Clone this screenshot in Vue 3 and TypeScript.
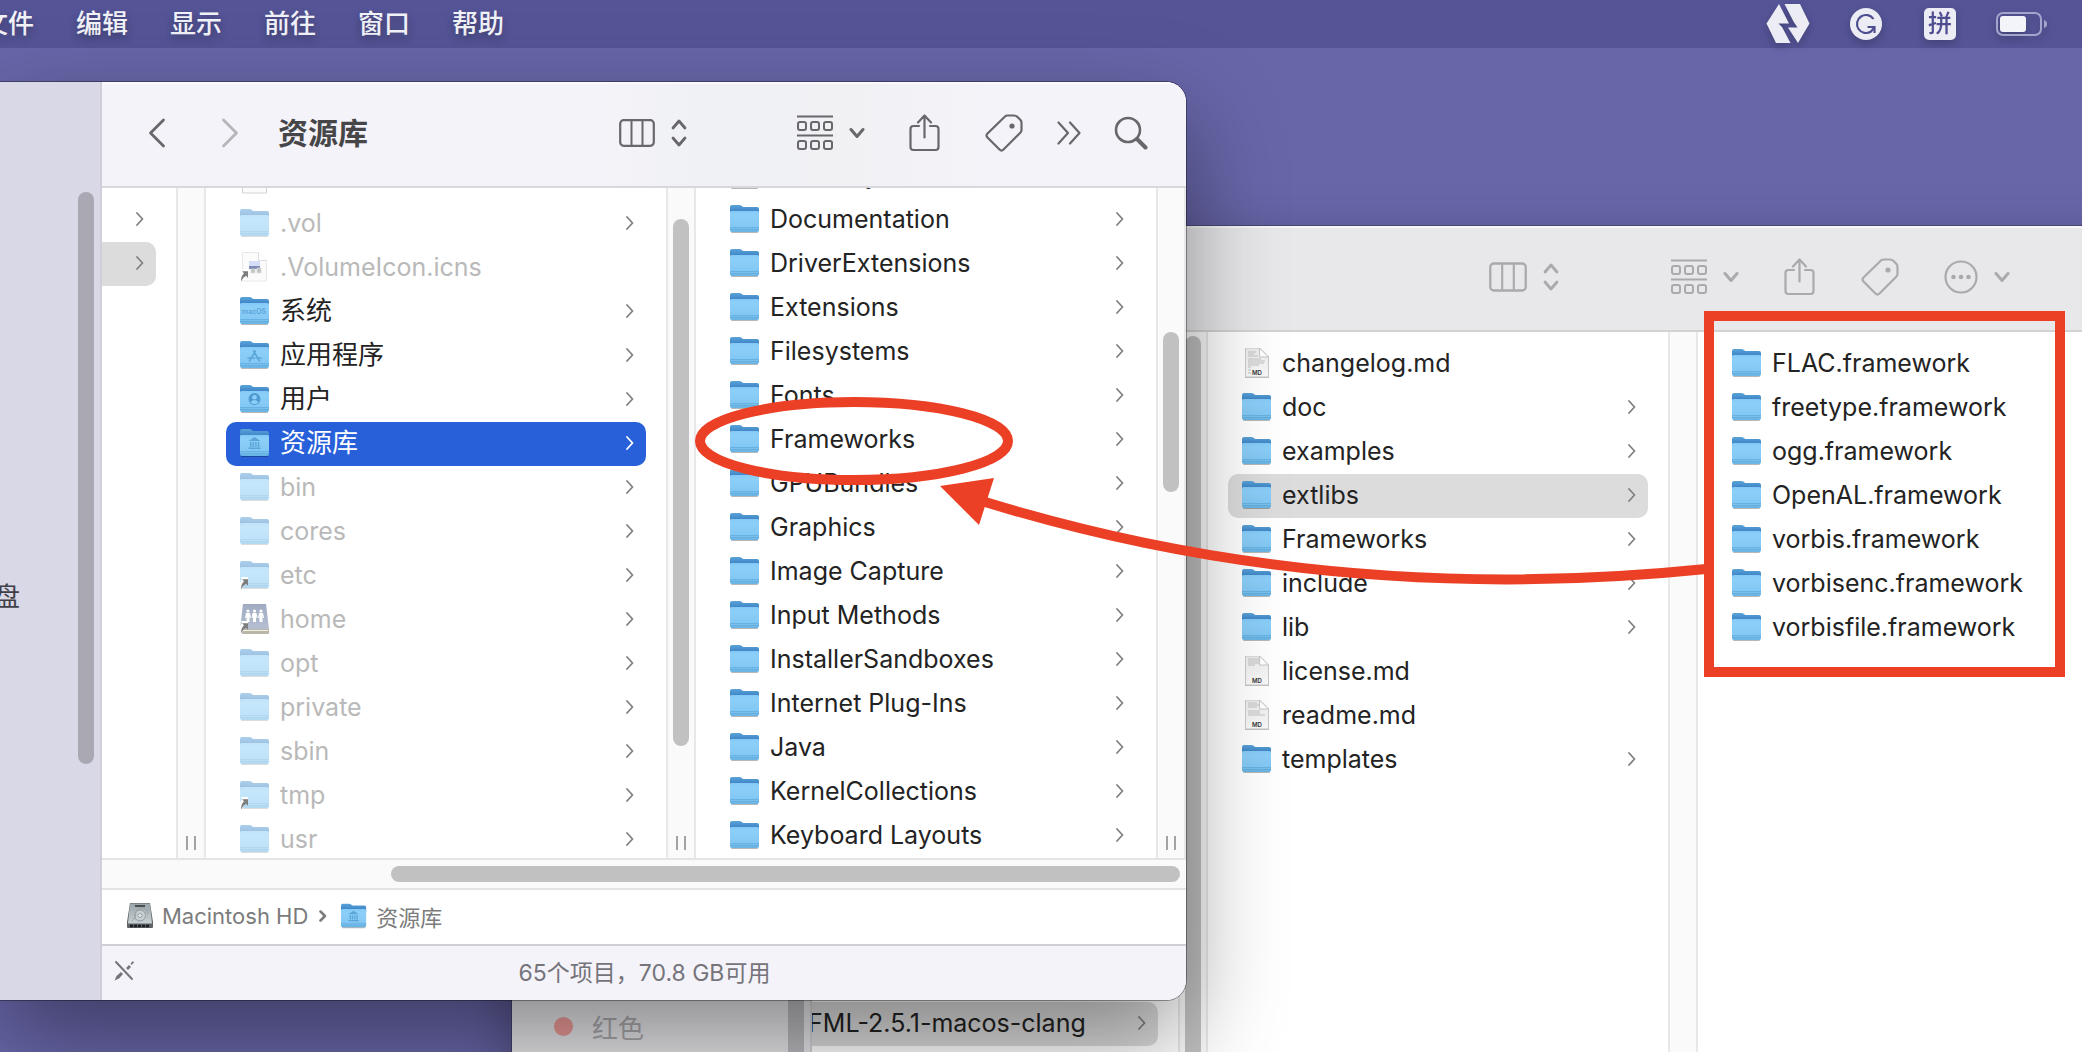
<script setup lang="ts">
type Mark = 'apps' | 'users' | 'library' | 'alias'
type Kind = 'folder' | 'doc' | 'md' | 'volume' | 'home'

interface Entry {
  name: string
  kind: Kind
  marks?: Mark[]
  caption?: string
  preview?: string
  dim?: boolean
  selected?: boolean
  leaf?: boolean
}

const folder = (name: string, extra: Partial<Entry> = {}): Entry => ({ name, kind: 'folder', ...extra })
const dim = (name: string, extra: Partial<Entry> = {}): Entry => folder(name, { dim: true, ...extra })
const markdown = (name: string, preview: string): Entry => ({ name, kind: 'md', preview, leaf: true })

const menus: string[] = ['文件', '编辑', '显示', '前往', '窗口', '帮助']

const rootEntries: Entry[] = [
  { name: '.file', kind: 'doc', dim: true, leaf: true },
  dim('.vol'),
  { name: '.VolumeIcon.icns', kind: 'volume', marks: ['alias'], dim: true, leaf: true },
  folder('系统', { caption: 'macOS' }),
  folder('应用程序', { marks: ['apps'] }),
  folder('用户', { marks: ['users'] }),
  folder('资源库', { marks: ['library'], selected: true }),
  dim('bin'),
  dim('cores'),
  dim('etc', { marks: ['alias'] }),
  { name: 'home', kind: 'home', marks: ['alias'], dim: true },
  dim('opt'),
  dim('private'),
  dim('sbin'),
  dim('tmp', { marks: ['alias'] }),
  dim('usr'),
]

const libraryEntries: Entry[] = [
  'DirectoryServices', 'Documentation', 'DriverExtensions', 'Extensions', 'Filesystems', 'Fonts',
  'Frameworks', 'GPUBundles', 'Graphics', 'Image Capture', 'Input Methods', 'InstallerSandboxes',
  'Internet Plug-Ins', 'Java', 'KernelCollections', 'Keyboard Layouts',
].map((n) => folder(n))

const sfmlEntries: Entry[] = [
  markdown('changelog.md', 'M6 4h8M6 6h6M6 8h10M6 11h13M6 13h17M6 15h16M6 17h11M6 19h3M6 22h3M6 25h3'),
  folder('doc'),
  folder('examples'),
  folder('extlibs', { selected: true }),
  folder('Frameworks'),
  folder('include'),
  folder('lib'),
  markdown('license.md', 'M6 3h11M6 5h11M6 7h11M6 9h7'),
  markdown('readme.md', 'M6 3h9M6 5h11M6 7h9M6 11h12M6 13h12M6 15h17'),
  folder('templates'),
]

const extlibEntries: Entry[] = ['FLAC', 'freetype', 'ogg', 'OpenAL', 'vorbis', 'vorbisenc', 'vorbisfile'].map((n) =>
  folder(`${n}.framework`, { leaf: true }),
)

const downloads: Entry[] = [folder('SFML-2.5.1-macos-clang', { selected: true })]

const backColumns = [
  { id: 'downloads', entries: downloads, gutter: true },
  { id: 'sfml', entries: sfmlEntries, gutter: true },
  { id: 'extlibs', entries: extlibEntries, gutter: false },
]
</script>

<template>
  <div class="desktop">
    <svg class="defs" width="0" height="0" aria-hidden="true">
      <defs>
        <linearGradient id="g-front" x1="0" y1="0" x2="0" y2="1">
          <stop offset="0" stop-color="#84c9f6" />
          <stop offset=".2" stop-color="#8ccff9" />
          <stop offset=".75" stop-color="#83c8f4" />
          <stop offset="1" stop-color="#66b2e2" />
        </linearGradient>
        <linearGradient id="g-back" x1="0" y1="0" x2="0" y2="1">
          <stop offset="0" stop-color="#5aa3d8" />
          <stop offset="1" stop-color="#2f74bd" />
        </linearGradient>
        <linearGradient id="g-disk" x1="0" y1="0" x2="0" y2="1">
          <stop offset="0" stop-color="#9aa4aa" />
          <stop offset="1" stop-color="#c9d1d5" />
        </linearGradient>
        <linearGradient id="g-home" x1="0" y1="0" x2="0" y2="1">
          <stop offset="0" stop-color="#a0abc2" />
          <stop offset="1" stop-color="#b6bfd2" />
        </linearGradient>
        <linearGradient id="g-page" x1="0" y1="0" x2="0" y2="1">
          <stop offset="0" stop-color="#ececec" />
          <stop offset="1" stop-color="#fafafa" />
        </linearGradient>
      </defs>
      <symbol id="folder" viewBox="0 0 30 30">
        <rect x="1" y="26" width="27" height="3" rx="1" fill="#000" opacity=".28" />
        <path d="M0 3q0-2 2-2h7q2 0 3 1l1 1h14q2 0 2 2v6H0z" fill="url(#g-back)" />
        <path d="M0 8q0-1 2-1h25q2 0 2 1v18q0 2-2 2H2q-2 0-2-2z" fill="url(#g-front)" />
        <path d="M0 23.500h29M0 25.500h29" stroke="#4f9fd2" stroke-width=".7" opacity=".7" />
      </symbol>
      <symbol id="apps" viewBox="0 0 30 30">
        <path d="M13.500 11l6 10M15.500 11l-6 10M8 18h6.500M16.500 18h4.500" fill="none" stroke="#5ba5d8" stroke-width="1.500" stroke-linecap="round" />
      </symbol>
      <symbol id="users" viewBox="0 0 30 30">
        <circle cx="14.500" cy="15" r="6" fill="#4f9bd0" />
        <circle cx="14.500" cy="13.200" r="2.300" fill="#8ccff9" />
        <path d="M10.500 18.500q1-2.500 4-2.500t4 2.500q-4 3-8 0z" fill="#8ccff9" />
      </symbol>
      <symbol id="library" viewBox="0 0 30 30">
        <path d="M8.500 13l6-4 6 4zM10 14h1.600v5H10zm2.600 0h1.400v5h-1.400zm2.600 0h1.400v5h-1.400zm2.600 0h1.500v5h-1.500zM8.500 19.500h12V21h-12z" fill="#5ba5d8" />
      </symbol>
      <symbol id="alias" viewBox="0 0 30 30">
        <path d="M0 30v-5q0-4 2-6l-1-2h7v8l-2-2q-3 2-4 7z" fill="#fff" />
        <path d="M1 29.500q0-6 3-8l-1.800-2.300H8v6.600l-2-2q-3 1.500-5 5.700z" fill="#7d7d7d" />
      </symbol>
      <symbol id="doc" viewBox="0 0 30 30">
        <path d="M2.500 1.500h16l8 8v19.500h-24z" fill="#fbfbfb" stroke="#d4d4d4" />
        <path d="M18.500 1.500v8h8" fill="#fff" stroke="#ccc" />
      </symbol>
      <symbol id="volume" viewBox="0 0 30 30">
        <path d="M2.500.500h16l8 8v20.500h-24z" fill="#fbfbfb" stroke="#e8e8e8" />
        <path d="M18.500.500v8h8" fill="#fff" stroke="#dedede" />
        <path d="M9 9h11v8H9z" fill="#d5def8" />
        <path d="M9 14h11v3H9z" fill="#7f8bb4" />
        <path d="M11 17h4v4h-4zm6-1h4v5h-4z" fill="#c2c2c2" stroke="#ddd" stroke-width=".7" />
      </symbol>
      <symbol id="md" viewBox="0 0 30 30">
        <path d="M3 29h24" stroke="#000" stroke-width="2" opacity=".25" />
        <path d="M3.500 0h14l9 9v20h-23z" fill="url(#g-page)" stroke="#c9c9c9" />
        <path d="M17.500 0v9h9z" fill="#fff" stroke="#bdbdbd" stroke-width=".8" />
      </symbol>
      <symbol id="home" viewBox="0 0 30 30">
        <path d="M3 0h23l3 25H0z" fill="url(#g-home)" />
        <path d="M0 25h29v4q0 1-1 1H1q-1 0-1-1z" fill="#b9b5a8" />
        <path d="M1 26.500h27" stroke="#f2efe6" />
        <g fill="#fff">
          <circle cx="8" cy="7" r="1.600" /><circle cx="14.500" cy="7" r="1.600" /><circle cx="21" cy="7" r="1.600" />
          <path d="M6 9h4l1 5-1 0-.500-2v6H6.500v-6L6 14H5zM12.500 9h4l1 5-1 0-.500-2v6H13v-6l-.500 2h-1zM19 9h4l1 5-1 0-.500-2v6h-3v-6l-.500 2h-1z" />
        </g>
      </symbol>
      <symbol id="disk" viewBox="0 0 26 26">
        <path d="M3 0h20l3 19v5q0 1-1 1H1q-1 0-1-1v-5z" fill="#5d6367" />
        <path d="M3 .500h20l2 20H1z" fill="url(#g-disk)" />
        <path d="M8 2h10v2H8z" fill="#4a4f52" />
        <circle cx="13" cy="12.500" r="5.500" fill="#c6ced2" stroke="#939ca1" />
        <circle cx="13" cy="12.500" r="2" fill="#e3e8ea" stroke="#8b9499" stroke-width=".8" />
        <path d="M5 18q4-3 4-8t6-5 6 6" fill="none" stroke="#9aa3a8" />
        <path d="M3 23h20" stroke="#1c1f21" stroke-width="2.500" stroke-dasharray="3 1" />
      </symbol>
      <symbol id="more" viewBox="0 0 8 16">
        <path d="M1 2l5.500 6L1 14" fill="none" stroke="currentColor" stroke-width="1.800" stroke-linecap="round" stroke-linejoin="round" />
      </symbol>
      <symbol id="columns" viewBox="0 0 36 28">
        <rect x="1.200" y="1.200" width="33.600" height="25.600" rx="3.500" fill="none" stroke="currentColor" stroke-width="2.200" />
        <path d="M12.500 2v24M23.500 2v24" stroke="currentColor" stroke-width="2" />
      </symbol>
      <symbol id="updown" viewBox="0 0 16 28">
        <path d="M2 9l6-7 6 7M2 19l6 7 6-7" fill="none" stroke="currentColor" stroke-width="2.800" stroke-linecap="round" stroke-linejoin="round" />
      </symbol>
      <symbol id="down" viewBox="0 0 16 12">
        <path d="M2 2.500l6 7 6-7" fill="none" stroke="currentColor" stroke-width="3" stroke-linecap="round" stroke-linejoin="round" />
      </symbol>
      <symbol id="group" viewBox="0 0 36 36">
        <path d="M0 1.500h36M0 20.500h36" stroke="currentColor" stroke-width="2" />
        <g fill="none" stroke="currentColor" stroke-width="2">
          <rect x="1" y="7" width="8" height="8" rx="2" /><rect x="14" y="7" width="8" height="8" rx="2" /><rect x="27" y="7" width="8" height="8" rx="2" />
          <rect x="1" y="26" width="8" height="8" rx="2" /><rect x="14" y="26" width="8" height="8" rx="2" /><rect x="27" y="26" width="8" height="8" rx="2" />
        </g>
      </symbol>
      <symbol id="share" viewBox="0 0 32 38">
        <path d="M10 12H4.500q-3 0-3 3v18q0 3 3 3h22q3 0 3-3V15q0-3-3-3H21" fill="none" stroke="currentColor" stroke-width="2.200" stroke-linecap="round" />
        <path d="M15.500 23.500V2M9 8.500l6.500-7 6.500 7" fill="none" stroke="currentColor" stroke-width="2.200" stroke-linecap="round" stroke-linejoin="round" />
      </symbol>
      <symbol id="tag" viewBox="0 0 38 38">
        <path d="M20 2.500q1-1 2.500-1H29q2 0 3.500 1.500L35.500 6q1 1 1 3v7q0 1.500-1 2.500L18.500 35.500q-2 2-4 0L2.500 23.500q-2-2 0-4z" fill="none" stroke="currentColor" stroke-width="2.200" stroke-linejoin="round" />
        <circle cx="27" cy="12" r="2.600" fill="currentColor" />
      </symbol>
      <symbol id="chevrons" viewBox="0 0 24 24">
        <path d="M1.500 1.500L11 12 1.500 22.500M13 1.500L22.500 12 13 22.500" fill="none" stroke="currentColor" stroke-width="2.200" stroke-linecap="round" stroke-linejoin="round" />
      </symbol>
      <symbol id="search" viewBox="0 0 34 34">
        <circle cx="14" cy="14" r="12" fill="none" stroke="currentColor" stroke-width="2.600" />
        <path d="M23 23l8.500 8.500" stroke="currentColor" stroke-width="4" stroke-linecap="round" />
      </symbol>
      <symbol id="dots" viewBox="0 0 34 34">
        <circle cx="17" cy="17" r="15.500" fill="none" stroke="currentColor" stroke-width="2.200" />
        <g fill="currentColor"><circle cx="9.500" cy="17" r="2.300" /><circle cx="17" cy="17" r="2.300" /><circle cx="24.500" cy="17" r="2.300" /></g>
      </symbol>
    </svg>

    <header class="menubar">
      <nav class="menus">
        <button v-for="m in menus" :key="m" type="button">{{ m }}</button>
      </nav>
      <div class="status-items">
        <svg width="44" height="42" viewBox="0 0 44 42" aria-label="Network">
          <path d="M13 1L.500 20.500 10 40h14.500L16 24l-3.500-3.500H23L13 1z" fill="#ececf5" />
          <path d="M18.500 1H34l9.500 19.500L32 40 22 24.500h9.500l-4-6z" fill="#ececf5" />
        </svg>
        <svg width="36" height="32" viewBox="0 0 36 32" aria-label="Grammarly">
          <circle cx="18" cy="16" r="16" fill="#ececf5" />
          <path d="M25.500 11A9 9 0 1 0 23 23.500l3-3.500" fill="none" stroke="#4d4d90" stroke-width="2.200" />
          <path d="M19.500 19h7v6" fill="none" stroke="#4d4d90" stroke-width="2.200" />
        </svg>
        <span class="ime"><span>拼</span></span>
        <svg width="52" height="24" viewBox="0 0 52 24" aria-label="Battery">
          <rect x="1" y="1" width="44" height="22" rx="6" fill="none" stroke="#a5a4cd" stroke-width="2" />
          <rect x="4" y="4" width="26" height="16" rx="3" fill="#f3f3fa" />
          <path d="M48 8q3 1 3 4t-3 4z" fill="#a5a4cd" />
        </svg>
      </div>
    </header>

    <section class="window back" aria-label="extlibs">
      <aside class="side">
        <div class="side-list">
          <a href="#red" class="label-row"><i class="dot"></i>红色</a>
        </div>
        <div class="track"><div class="thumb"></div></div>
      </aside>
      <div class="main">
        <div class="toolbar">
          <div class="tools">
            <button type="button" class="pair view" aria-label="View">
              <svg width="38" height="30"><use href="#columns" /></svg>
              <svg width="16" height="28"><use href="#updown" /></svg>
            </button>
            <button type="button" class="pair" aria-label="Group">
              <svg width="36" height="36"><use href="#group" /></svg>
              <svg width="16" height="12"><use href="#down" /></svg>
            </button>
            <button type="button" aria-label="Share"><svg width="32" height="38"><use href="#share" /></svg></button>
            <button type="button" aria-label="Tags"><svg width="38" height="38"><use href="#tag" /></svg></button>
            <button type="button" class="pair" aria-label="More">
              <svg width="34" height="34"><use href="#dots" /></svg>
              <svg width="16" height="12"><use href="#down" /></svg>
            </button>
          </div>
        </div>
        <div class="columns">
          <template v-for="col in backColumns" :key="col.id">
            <div class="column" :class="col.id">
              <ul>
                <li v-for="e in col.entries" :key="e.name">
                  <button type="button" class="row" :class="{ gray: e.selected }">
                    <svg class="icon" width="30" height="30" viewBox="0 0 30 30">
                      <use :href="`#${e.kind}`" />
                      <template v-if="e.kind === 'md'">
                        <path :d="e.preview" stroke="#c2c2c2" />
                        <text x="15" y="27" class="badge">MD</text>
                      </template>
                    </svg>
                    <span class="name">{{ e.name }}</span>
                    <svg v-if="!e.leaf" class="chev" width="8" height="16"><use href="#more" /></svg>
                  </button>
                </li>
              </ul>
            </div>
            <div v-if="col.gutter" class="gutter"><div v-if="col.id === 'downloads'" class="thumb long"></div></div>
          </template>
        </div>
      </div>
    </section>

    <section class="window front" aria-label="资源库">
      <div class="body">
        <aside class="side">
          <div class="side-list"><a href="#disk">盘</a></div>
          <div class="thumb"></div>
        </aside>
        <div class="main">
          <div class="toolbar">
            <div class="history">
              <button type="button" aria-label="Back">
                <svg width="18" height="30" viewBox="0 0 18 30"><path d="M15.500 2L2.500 15l13 13" fill="none" stroke="currentColor" stroke-width="2.800" stroke-linecap="round" stroke-linejoin="round" /></svg>
              </button>
              <button type="button" class="off" aria-label="Forward">
                <svg width="18" height="30" viewBox="0 0 18 30"><path d="M2.500 2l13 13-13 13" fill="none" stroke="currentColor" stroke-width="2.800" stroke-linecap="round" stroke-linejoin="round" /></svg>
              </button>
            </div>
            <h1>资源库</h1>
            <div class="tools">
              <button type="button" class="pair view" aria-label="View">
                <svg width="36" height="28"><use href="#columns" /></svg>
                <svg width="16" height="28"><use href="#updown" /></svg>
              </button>
              <button type="button" class="pair" aria-label="Group">
                <svg width="36" height="36"><use href="#group" /></svg>
                <svg width="16" height="12"><use href="#down" /></svg>
              </button>
              <button type="button" aria-label="Share"><svg width="32" height="38"><use href="#share" /></svg></button>
              <button type="button" aria-label="Tags"><svg width="38" height="38"><use href="#tag" /></svg></button>
              <div class="tail">
                <button type="button" aria-label="More items"><svg width="24" height="24"><use href="#chevrons" /></svg></button>
                <button type="button" aria-label="Search"><svg width="34" height="34"><use href="#search" /></svg></button>
              </div>
            </div>
          </div>
          <div class="columns">
            <div class="column disks">
              <ul>
                <li><button type="button" class="row" aria-label="Network"><svg class="chev" width="8" height="16"><use href="#more" /></svg></button></li>
                <li><button type="button" class="row gray" aria-label="Macintosh HD"><svg class="chev" width="8" height="16"><use href="#more" /></svg></button></li>
              </ul>
            </div>
            <div class="gutter"><i class="grip"></i></div>
            <div class="column root">
              <ul>
                <li v-for="e in rootEntries" :key="e.name">
                  <button type="button" class="row" :class="{ blue: e.selected, dim: e.dim }">
                    <svg class="icon" width="30" height="30" viewBox="0 0 30 30">
                      <use :href="`#${e.kind}`" :class="{ faded: e.dim && e.kind === 'folder' }" />
                      <use v-for="m in e.marks" :key="m" :href="`#${m}`" />
                      <text v-if="e.caption" x="14" y="18" class="caption">{{ e.caption }}</text>
                    </svg>
                    <span class="name" lang="zh">{{ e.name }}</span>
                    <svg v-if="!e.leaf" class="chev" width="8" height="16"><use href="#more" /></svg>
                  </button>
                </li>
              </ul>
            </div>
            <div class="gutter"><div class="thumb root-thumb"></div><i class="grip"></i></div>
            <div class="column library">
              <ul>
                <li v-for="e in libraryEntries" :key="e.name">
                  <button type="button" class="row">
                    <svg class="icon" width="30" height="30"><use href="#folder" /></svg>
                    <span class="name">{{ e.name }}</span>
                    <svg class="chev" width="8" height="16"><use href="#more" /></svg>
                  </button>
                </li>
              </ul>
            </div>
            <div class="gutter"><div class="thumb library-thumb"></div><i class="grip"></i></div>
          </div>
          <div class="hscroll"><div class="hthumb"></div></div>
          <nav class="pathbar">
            <a href="#hd"><svg width="26" height="26"><use href="#disk" /></svg>Macintosh HD</a>
            <svg class="sep" width="8" height="14" viewBox="0 0 8 14"><path d="M1.500 2.500L6 7l-4.500 4.500" fill="none" stroke="currentColor" stroke-width="2.500" stroke-linecap="round" stroke-linejoin="round" /></svg>
            <a href="#library"><svg width="26" height="26" viewBox="0 0 30 30"><use href="#folder" /><use href="#library" /></svg>资源库</a>
          </nav>
          <footer class="statusbar">
            <svg width="22" height="22" viewBox="0 0 22 22">
              <path d="M3 2l16 17" stroke="currentColor" stroke-width="2" stroke-linecap="round" />
              <path d="M1.500 20.500l2-4.500L8 12l2 2-4 4.500zM13 8l3-3 2 2-3 3zM17.500 3.500L20 1l1 1.500-2.500 2.500z" fill="currentColor" />
            </svg>
            <p>65个项目，70.8 GB可用</p>
          </footer>
        </div>
      </div>
    </section>

    <svg class="annotations" width="2082" height="1052" viewBox="0 0 2082 1052" aria-hidden="true">
      <g fill="none" stroke="#eb4025" stroke-width="10">
        <rect x="1709" y="316" width="351" height="356" />
        <ellipse cx="854" cy="441" rx="154" ry="39" />
        <path d="M1706 569Q1328 608 982 501" />
      </g>
      <path d="M940 486L994 478 979 525z" fill="#eb4025" />
    </svg>
  </div>
</template>

<style>
body {
  margin: 0;
}
</style>

<style scoped>
.desktop {
  position: relative;
  min-height: 100vh;
  overflow: hidden;
  background: #6866a9;
  color: #232323;
  font-family: Inter, "Noto Sans CJK SC", sans-serif;
  font-size: 25px;
}
.desktop *,
.desktop *::before {
  box-sizing: border-box;
}
.defs {
  position: absolute;
}
svg {
  display: block;
  flex: none;
}
button {
  padding: 0;
  border: 0;
  background: none;
  color: inherit;
  font: inherit;
  text-align: left;
}
a {
  color: inherit;
  text-decoration: none;
}
ul {
  margin: 0;
  padding: 0;
  list-style: none;
}

.menubar {
  display: flex;
  align-items: center;
  justify-content: space-between;
  height: 48px;
  padding-right: 34px;
  background: #545497;
}
.menus {
  display: flex;
  gap: 42px;
  margin-left: -18px;
}
.menus button {
  color: #f1f1f8;
  font-size: 26px;
  font-weight: 500;
  line-height: 46px;
  text-shadow: 0 4px 8px rgba(0, 0, 0, 0.3);
}
.status-items {
  display: flex;
  align-items: center;
  gap: 38px;
  filter: drop-shadow(0 4px 4px rgba(0, 0, 0, 0.2));
}
.ime {
  display: flex;
  justify-content: center;
  width: 36px;
}
.ime span {
  width: 32px;
  height: 32px;
  border-radius: 5px;
  background: #ececf5;
  color: #4d4d90;
  font-size: 24px;
  font-weight: 500;
  line-height: 31px;
  text-align: center;
}

.window {
  position: absolute;
  background: #fff;
}
.main {
  display: flex;
  flex: 1;
  flex-direction: column;
  min-width: 0;
}
.toolbar {
  display: flex;
  flex: none;
  align-items: center;
  height: 106px;
  padding-bottom: 2px;
  border-bottom: 2px solid #d8d7dc;
}
.tools {
  display: flex;
  align-items: center;
  gap: 45px;
  margin-left: auto;
}
.pair {
  display: flex;
  align-items: center;
  gap: 16px;
}
.view {
  margin-right: 67px;
}
.columns {
  display: flex;
  flex: 1;
  min-height: 0;
}
.column {
  flex: none;
  width: 460px;
  padding: 0 20px;
  overflow: hidden;
}
.gutter {
  display: flex;
  flex: none;
  flex-direction: column;
  align-items: center;
  width: 30px;
  border: solid #e8e8e8;
  border-width: 0 2px;
  background: #fafafa;
}
.thumb {
  flex: none;
  width: 16px;
  border-radius: 8px;
  background: #c1c1c1;
}
.grip {
  width: 10px;
  height: 14px;
  margin: auto 0 8px;
  border: solid #a3a3a3;
  border-width: 0 2px;
}
.row {
  display: flex;
  align-items: center;
  gap: 10px;
  width: 100%;
  height: 44px;
  padding: 0 12px 2px 14px;
  border-radius: 10px;
}
.name {
  flex: 1;
  line-height: 42px;
  white-space: nowrap;
}
.name:lang(zh) {
  font-size: 26px;
}
.dim .name {
  font-size: 25px;
}
.caption {
  fill: #5ba5d8;
  font-size: 7px;
  font-weight: 600;
  text-anchor: middle;
}
.badge {
  fill: #333;
  font-size: 6px;
  font-weight: 600;
  text-anchor: middle;
}
.chev {
  margin-left: auto;
  color: #808080;
}
.gray {
  background: #dcdcdc;
}
.blue {
  background: #2860da;
  color: #fff;
}
.blue .chev {
  color: #fff;
}
.dim {
  color: #b9b9b9;
}
.faded {
  opacity: 0.5;
}

.back {
  display: flex;
  top: 226px;
  right: -40px;
  bottom: -40px;
  left: 512px;
  box-shadow: 0 0 0 1px rgba(0, 0, 0, 0.25), 0 16px 50px rgba(0, 0, 0, 0.3);
}
.back .side {
  display: flex;
  flex: none;
  width: 300px;
  border-right: 2px solid #d2d2d5;
  background: #e6e5e9;
}
.back .side-list {
  flex: 1;
  padding-top: 778px;
}
.label-row {
  display: flex;
  align-items: center;
  gap: 19px;
  height: 44px;
  padding-left: 42px;
  color: #a9a8ac;
  font-size: 26px;
}
.dot {
  width: 19px;
  height: 19px;
  border-radius: 50%;
  background: #ec9b98;
}
.track {
  display: flex;
  padding: 110px 6px 0 0;
}
.track .thumb {
  background: #b9b8bc;
}
.back .toolbar {
  padding-right: 112px;
  border-bottom-color: #d3d2d5;
  background: #e8e7ea;
  box-shadow: inset 0 2px #f5f5f6;
  color: #aaa9ac;
}
.back .column {
  padding-top: 10px;
}
.back .downloads {
  display: flex;
  flex: 0 0 366px;
  justify-content: flex-end;
  padding: 670px 20px 0 0;
}
.back .downloads ul {
  flex: none;
  width: 420px;
}
.long {
  flex: 1;
  margin-top: 4px;
}

.front {
  top: 82px;
  left: 0;
  width: 1186px;
  border-radius: 0 20px 20px 0;
  box-shadow: 0 0 0 1px rgba(0, 0, 0, 0.35), 0 37px 96px rgba(0, 0, 0, 0.42);
}
.body {
  display: flex;
  height: 918px;
  overflow: hidden;
  border-radius: 0 20px 20px 0;
}
.front .side {
  display: flex;
  flex: none;
  justify-content: space-between;
  width: 102px;
  border-right: 2px solid #cfceda;
  background: #d9d8e6;
}
.front .side-list {
  padding-top: 493px;
  margin-left: -6px;
  font-size: 26px;
  line-height: 44px;
  color: #403f45;
}
.front .side .thumb {
  height: 572px;
  margin: 110px 6px 0 0;
  background: #a9a8b3;
}
.front .toolbar {
  padding-right: 38px;
  padding-left: 46px;
  background: linear-gradient(90deg, #f4f3f9 46%, #eff1f5 56%, #f1f1f4 68%, #f4f3f9 82%);
  box-shadow: inset 0 2px #fbfbfd;
  color: #68676b;
}
.front .tools {
  gap: 44px;
}
.front .view {
  margin-right: 66px;
}
.history {
  display: flex;
  gap: 55px;
}
.front .off {
  color: #b6b5ba;
}
h1 {
  margin: 0 0 0 39px;
  color: #464649;
  font-size: 30px;
  font-weight: 700;
  line-height: 44px;
}
.tail {
  display: flex;
  align-items: center;
  gap: 33px;
  margin-left: -10px;
}
.disks {
  width: 74px;
  padding: 10px 20px 0 0;
}
.disks .row {
  border-radius: 0 10px 10px 0;
}
.root ul {
  margin-top: -30px;
}
.library ul {
  margin-top: -34px;
}
.root-thumb {
  height: 527px;
  margin-top: 31px;
}
.library-thumb {
  height: 160px;
  margin-top: 144px;
}
.hscroll {
  flex: none;
  height: 32px;
  padding: 6px 6px 0 289px;
  border: solid #e4e4e4;
  border-width: 2px 0;
  background: #fafafa;
}
.hthumb {
  height: 16px;
  border-radius: 8px;
  background: #c1c1c1;
}
.pathbar {
  display: flex;
  flex: none;
  align-items: center;
  height: 54px;
  padding: 0 0 2px 25px;
  color: #7b7b7b;
  font-size: 22px;
}
.pathbar a {
  display: flex;
  align-items: center;
  gap: 9px;
}
.sep {
  margin: 0 14px 0 11px;
}
.statusbar {
  display: flex;
  flex: none;
  align-items: center;
  height: 56px;
  padding: 0 32px 4px 11px;
  border-top: 2px solid #d0cfd6;
  background: #f4f3f9;
  color: #75747a;
  font-size: 23px;
}
.statusbar p {
  flex: 1;
  margin: 0;
  text-align: center;
}
.annotations {
  position: absolute;
  top: 0;
  left: 0;
  pointer-events: none;
}
</style>
